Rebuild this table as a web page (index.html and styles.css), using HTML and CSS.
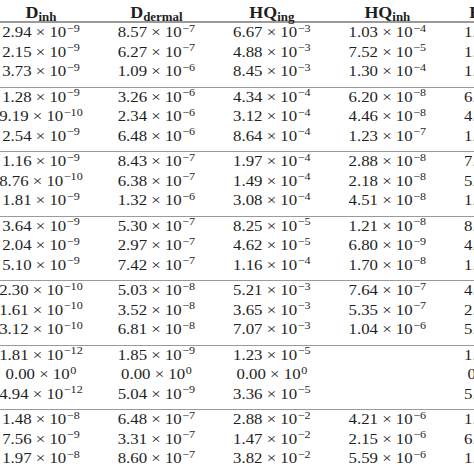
FILE: index.html
```html
<!DOCTYPE html>
<html>
<head>
<meta charset="utf-8">
<link rel="stylesheet" href="styles.css">
</head>
<body>
<div class="page">
<div class="table">
  <div class="row head">
    <div>D<sub>inh</sub></div>
    <div>D<sub>dermal</sub></div>
    <div>HQ<sub>ing</sub></div>
    <div>HQ<sub>inh</sub></div>
    <div>HQ<sub>dermal</sub></div>
  </div>

  <div class="group first">
    <div class="row"><div>2.94 × 10<sup>−9</sup></div><div>8.57 × 10<sup>−7</sup></div><div>6.67 × 10<sup>−3</sup></div><div>1.03 × 10<sup>−4</sup></div><div>1.32 × 10<sup>−5</sup></div></div>
    <div class="row"><div>2.15 × 10<sup>−9</sup></div><div>6.27 × 10<sup>−7</sup></div><div>4.88 × 10<sup>−3</sup></div><div>7.52 × 10<sup>−5</sup></div><div>1.09 × 10<sup>−5</sup></div></div>
    <div class="row"><div>3.73 × 10<sup>−9</sup></div><div>1.09 × 10<sup>−6</sup></div><div>8.45 × 10<sup>−3</sup></div><div>1.30 × 10<sup>−4</sup></div><div>1.68 × 10<sup>−5</sup></div></div>
  </div>

  <div class="group">
    <div class="row"><div>1.28 × 10<sup>−9</sup></div><div>3.26 × 10<sup>−6</sup></div><div>4.34 × 10<sup>−4</sup></div><div>6.20 × 10<sup>−8</sup></div><div>6.51 × 10<sup>−5</sup></div></div>
    <div class="row"><div>9.19 × 10<sup>−10</sup></div><div>2.34 × 10<sup>−6</sup></div><div>3.12 × 10<sup>−4</sup></div><div>4.46 × 10<sup>−8</sup></div><div>4.68 × 10<sup>−5</sup></div></div>
    <div class="row"><div>2.54 × 10<sup>−9</sup></div><div>6.48 × 10<sup>−6</sup></div><div>8.64 × 10<sup>−4</sup></div><div>1.23 × 10<sup>−7</sup></div><div>1.29 × 10<sup>−4</sup></div></div>
  </div>

  <div class="group">
    <div class="row"><div>1.16 × 10<sup>−9</sup></div><div>8.43 × 10<sup>−7</sup></div><div>1.97 × 10<sup>−4</sup></div><div>2.88 × 10<sup>−8</sup></div><div>7.02 × 10<sup>−6</sup></div></div>
    <div class="row"><div>8.76 × 10<sup>−10</sup></div><div>6.38 × 10<sup>−7</sup></div><div>1.49 × 10<sup>−4</sup></div><div>2.18 × 10<sup>−8</sup></div><div>5.31 × 10<sup>−6</sup></div></div>
    <div class="row"><div>1.81 × 10<sup>−9</sup></div><div>1.32 × 10<sup>−6</sup></div><div>3.08 × 10<sup>−4</sup></div><div>4.51 × 10<sup>−8</sup></div><div>1.10 × 10<sup>−5</sup></div></div>
  </div>

  <div class="group">
    <div class="row"><div>3.64 × 10<sup>−9</sup></div><div>5.30 × 10<sup>−7</sup></div><div>8.25 × 10<sup>−5</sup></div><div>1.21 × 10<sup>−8</sup></div><div>8.83 × 10<sup>−6</sup></div></div>
    <div class="row"><div>2.04 × 10<sup>−9</sup></div><div>2.97 × 10<sup>−7</sup></div><div>4.62 × 10<sup>−5</sup></div><div>6.80 × 10<sup>−9</sup></div><div>4.95 × 10<sup>−6</sup></div></div>
    <div class="row"><div>5.10 × 10<sup>−9</sup></div><div>7.42 × 10<sup>−7</sup></div><div>1.16 × 10<sup>−4</sup></div><div>1.70 × 10<sup>−8</sup></div><div>1.24 × 10<sup>−5</sup></div></div>
  </div>

  <div class="group">
    <div class="row"><div>2.30 × 10<sup>−10</sup></div><div>5.03 × 10<sup>−8</sup></div><div>5.21 × 10<sup>−3</sup></div><div>7.64 × 10<sup>−7</sup></div><div>4.30 × 10<sup>−6</sup></div></div>
    <div class="row"><div>1.61 × 10<sup>−10</sup></div><div>3.52 × 10<sup>−8</sup></div><div>3.65 × 10<sup>−3</sup></div><div>5.35 × 10<sup>−7</sup></div><div>2.95 × 10<sup>−6</sup></div></div>
    <div class="row"><div>3.12 × 10<sup>−10</sup></div><div>6.81 × 10<sup>−8</sup></div><div>7.07 × 10<sup>−3</sup></div><div>1.04 × 10<sup>−6</sup></div><div>5.82 × 10<sup>−6</sup></div></div>
  </div>

  <div class="group">
    <div class="row"><div>1.81 × 10<sup>−12</sup></div><div>1.85 × 10<sup>−9</sup></div><div>1.23 × 10<sup>−5</sup></div><div></div><div>1.58 × 10<sup>−7</sup></div></div>
    <div class="row"><div>0.00 × 10<sup>0</sup></div><div>0.00 × 10<sup>0</sup></div><div>0.00 × 10<sup>0</sup></div><div></div><div>0.00 × 10<sup>0</sup></div></div>
    <div class="row"><div>4.94 × 10<sup>−12</sup></div><div>5.04 × 10<sup>−9</sup></div><div>3.36 × 10<sup>−5</sup></div><div></div><div>5.24 × 10<sup>−7</sup></div></div>
  </div>

  <div class="group">
    <div class="row"><div>1.48 × 10<sup>−8</sup></div><div>6.48 × 10<sup>−7</sup></div><div>2.88 × 10<sup>−2</sup></div><div>4.21 × 10<sup>−6</sup></div><div>1.10 × 10<sup>−5</sup></div></div>
    <div class="row"><div>7.56 × 10<sup>−9</sup></div><div>3.31 × 10<sup>−7</sup></div><div>1.47 × 10<sup>−2</sup></div><div>2.15 × 10<sup>−6</sup></div><div>6.24 × 10<sup>−6</sup></div></div>
    <div class="row"><div>1.97 × 10<sup>−8</sup></div><div>8.60 × 10<sup>−7</sup></div><div>3.82 × 10<sup>−2</sup></div><div>5.59 × 10<sup>−6</sup></div><div>1.46 × 10<sup>−5</sup></div></div>
  </div>
</div>
</div>
</body>
</html>
```

FILE: styles.css
```css
html, body {
  margin: 0;
  padding: 0;
  background: #ffffff;
}
body {
  width: 474px;
  height: 474px;
  overflow: hidden;
}
.page {
  width: 474px;
  height: 474px;
  overflow: hidden;
}
.table {
  font-family: "Liberation Serif", "Times New Roman", serif;
  color: #1e1e1e;
  transform: scaleX(1.12);
  transform-origin: 0 0;
  width: 500px;
}
.row {
  display: grid;
  grid-template-columns: repeat(5, 103.1px);
  margin-left: -15px;
  text-align: center;
  white-space: nowrap;
  font-size: 15px;
  height: 19.5px;
  line-height: 19.5px;
}
.row sup {
  font-size: 0.72em;
  line-height: 0;
  vertical-align: 0.48em;
  margin-left: 0.5px;
}
.row.head {
  height: 19.5px;
  padding-top: 1.5px;
  line-height: 21px;
  font-size: 16px;
  font-weight: bold;
  border-bottom: 2px solid #9a9a9a;
  margin-right: -60px;
}
.row.head sub {
  font-size: 0.72em;
  line-height: 0;
  vertical-align: -0.25em;
}
.group {
  border-top: 1.5px solid #9a9a9a;
  padding-bottom: 5px;
  margin-right: -60px;
}
.group.first {
  border-top: none;
}
```
